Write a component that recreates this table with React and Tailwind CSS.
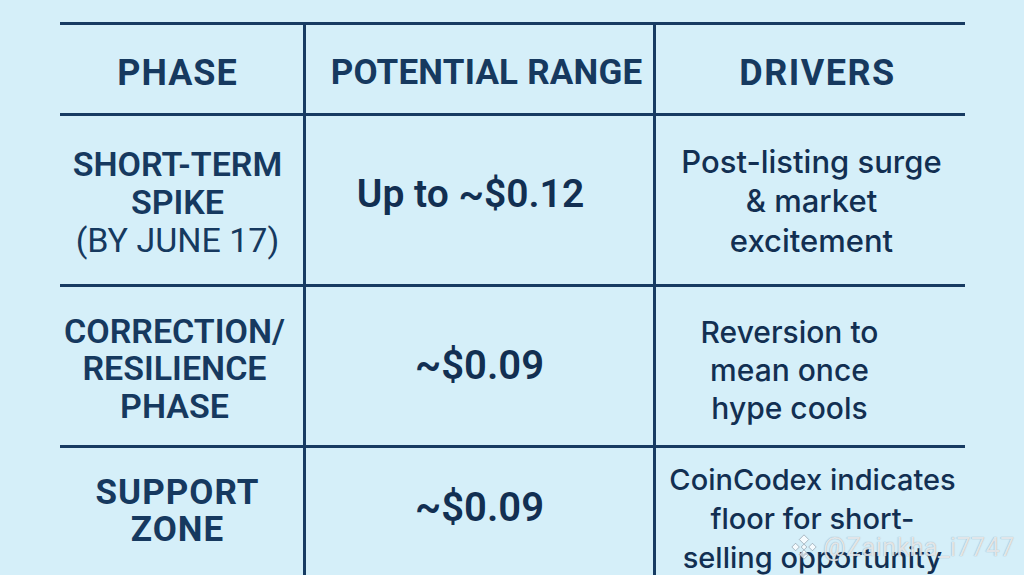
import React from "react";

const LINE = "border-[#173b62]";

function Row({ h, c1, c2, c3, c1cls = "", c2cls = "", c3cls = "" }) {
  return (
    <div className={`grid grid-cols-[243px_353px_309px] border-t-[3px] ${LINE} ${h}`}>
      <div className={`flex items-center justify-center text-center pr-[8px] ${c1cls}`}>{c1}</div>
      <div className={`flex items-center justify-center text-center border-x-[3px] ${LINE} ${c2cls}`}>{c2}</div>
      <div
        className={`flex items-center justify-center text-center ${c3cls}`}
        style={{ fontFamily: "Inter, Roboto, sans-serif" }}
      >
        {c3}
      </div>
    </div>
  );
}

function BinanceLogo() {
  return (
    <svg width="30" height="30" viewBox="0 0 32 32" fill="rgba(255,255,255,0.75)" stroke="rgba(120,135,150,0.6)" strokeWidth="1">
      <path d="M16 3 L21 8 L16 13 L11 8 Z" />
      <path d="M16 19 L21 24 L16 29 L11 24 Z" />
      <path d="M3 16 L7 12 L11 16 L7 20 Z" />
      <path d="M21 16 L25 12 L29 16 L25 20 Z" />
      <path d="M16 13 L19 16 L16 19 L13 16 Z" />
    </svg>
  );
}

export default function App() {
  return (
    <div
      className="relative w-[1024px] h-[575px] overflow-hidden bg-[#d5eff9]"
      style={{ fontFamily: "Roboto, 'Liberation Sans', sans-serif" }}
    >
      <div className="ml-[60px] mt-[22px] w-[905px] text-[#122f52]">
        <Row
          h="h-[91px]"
          c1cls="pt-[8px] text-[36px] font-bold tracking-[1px] text-[#16395f]"
          c2cls="pt-[8px] pl-[14px] text-[35px] font-bold tracking-[0.2px] text-[#16395f]"
          c3cls="pt-[8px] text-[36px] font-bold tracking-[1.5px] text-[#16395f] pl-[14px]"
          c1="PHASE"
          c2="POTENTIAL RANGE"
          c3={<span style={{ fontFamily: "Roboto, sans-serif" }}>DRIVERS</span>}
        />
        <Row
          h="h-[171px]"
          c1cls="text-[34px] leading-[38px] font-semibold text-[#16395f] pt-[4px]"
          c2cls="text-[39px] font-semibold pr-[18px] pb-[12px]"
          c3cls="text-[31px] leading-[39.5px] font-medium pl-[2px] pt-[2px]"
          c1={
            <div>
              SHORT-TERM
              <br />
              SPIKE
              <br />
              <span className="font-normal">(BY JUNE 17)</span>
            </div>
          }
          c2="Up to ~$0.12"
          c3={
            <div>
              Post-listing surge
              <br />& market
              <br />
              excitement
            </div>
          }
        />
        <Row
          h="h-[161px]"
          c1cls="text-[34px] leading-[37.5px] font-semibold text-[#16395f] pt-[6px] pr-[14px]"
          c2cls="text-[40px] font-semibold"
          c3cls="text-[30px] leading-[38px] font-medium pr-[42px] pt-[8px]"
          c1={
            <div>
              CORRECTION/
              <br />
              RESILIENCE
              <br />
              PHASE
            </div>
          }
          c2="~$0.09"
          c3={
            <div>
              Reversion to
              <br />
              mean once
              <br />
              hype cools
            </div>
          }
        />
        <Row
          h="h-[140px]"
          c1cls="text-[35px] leading-[37px] font-bold tracking-[1px] text-[#16395f] pb-[12px]"
          c2cls="text-[40px] font-semibold pb-[18px]"
          c3cls="text-[29px] leading-[39px] font-medium pt-[4px] pl-[4px]"
          c1={
            <div>
              SUPPORT
              <br />
              ZONE
            </div>
          }
          c2="~$0.09"
          c3={
            <div>
              CoinCodex indicates
              <br />
              floor for short-
              <br />
              selling opportunity
            </div>
          }
        />
      </div>
      <div className="absolute left-[789px] top-[532px] flex items-center gap-[4px]">
        <BinanceLogo />
        <span
          className="text-[25px] leading-none tracking-[0.5px] text-white/75 [text-shadow:0_0_1px_rgba(90,105,120,0.7)]"
          style={{ fontFamily: "Roboto, sans-serif" }}
        >
          @Zainkha_i7747
        </span>
      </div>
    </div>
  );
}
